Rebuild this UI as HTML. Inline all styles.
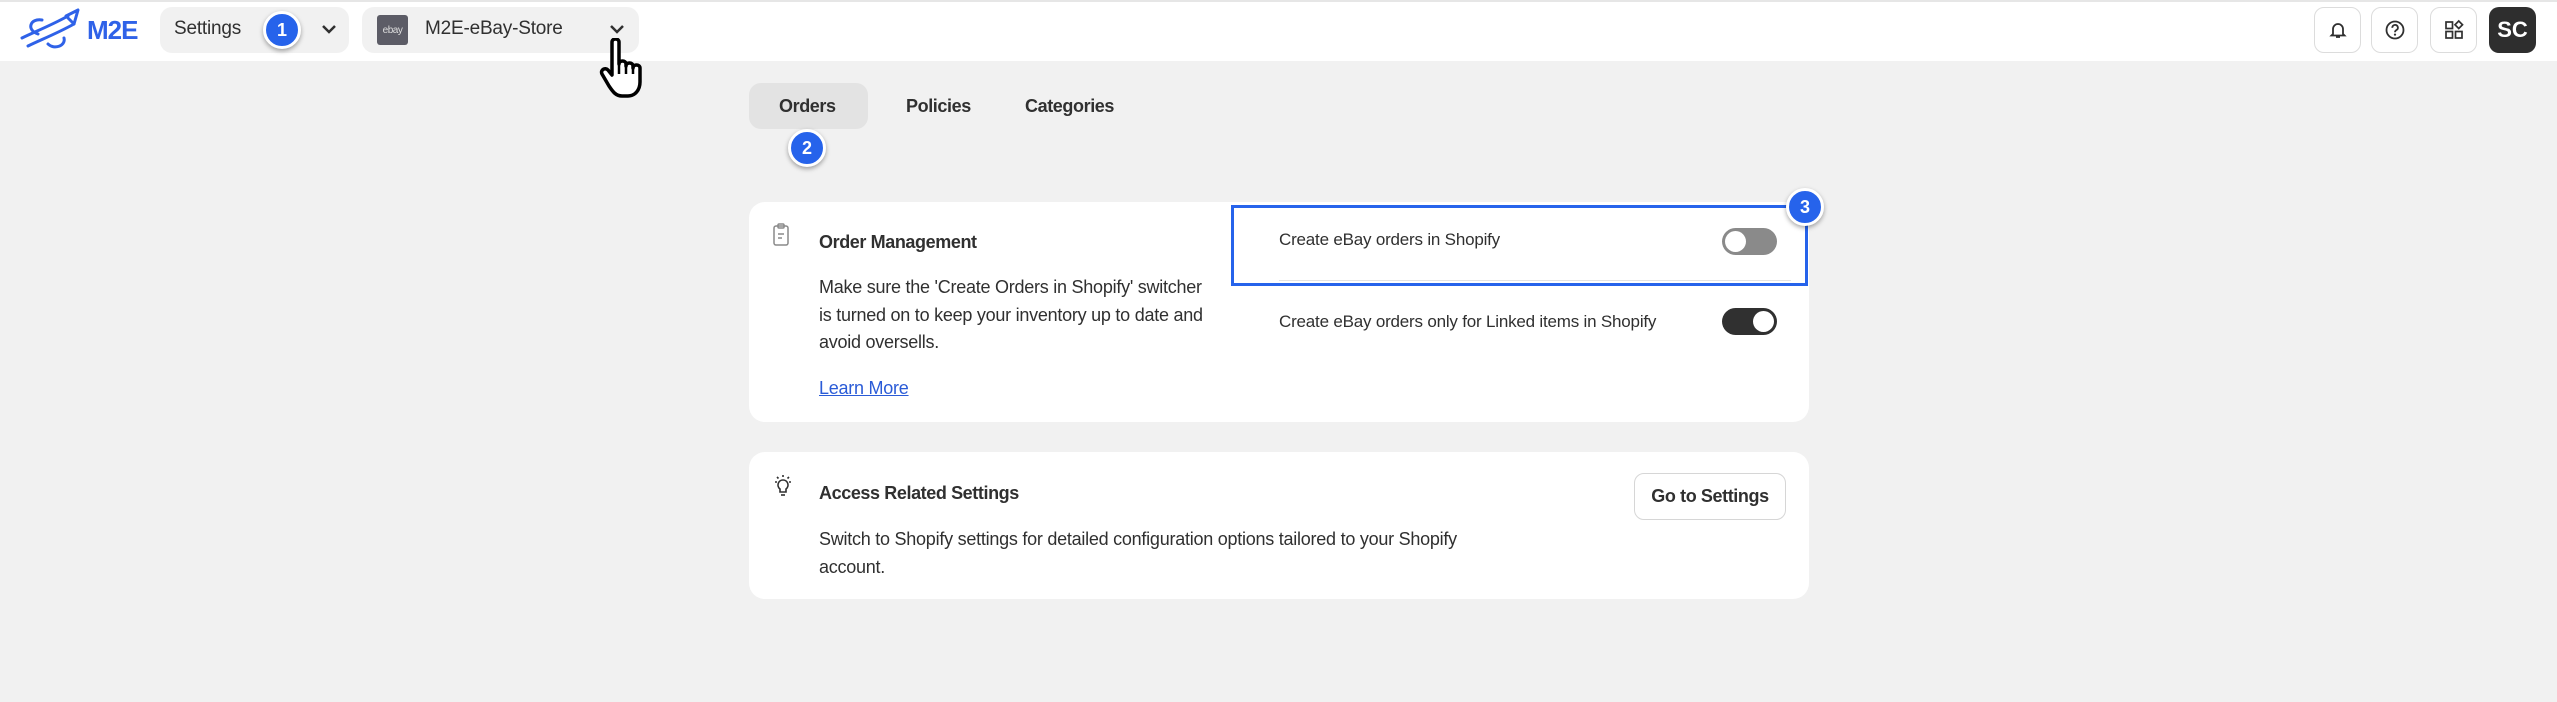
<!DOCTYPE html>
<html><head><meta charset="utf-8"><style>
*{box-sizing:border-box;margin:0;padding:0}
body{width:2557px;height:702px;background:#f1f1f1;font-family:"Liberation Sans",sans-serif;color:#303030;position:relative;overflow:hidden}
.a{position:absolute}
.bar{left:0;top:0;width:2557px;height:61px;background:#fff;border-top:2px solid #e6e6e6}
.pill{background:#f1f1f1;border-radius:12px;top:7px;height:46px}
.badge{position:absolute;width:38px;height:38px;border-radius:50%;background:#2663eb;border:3px solid #fff;box-shadow:0 2px 5px rgba(0,0,0,.35);color:#fff;font-size:18px;font-weight:bold;display:flex;align-items:center;justify-content:center}
.ib{top:7px;width:47px;height:46px;border:1.5px solid #dcdcdc;border-radius:10px;background:#fff;display:flex;align-items:center;justify-content:center}
.card{background:#fff;border-radius:16px;left:749px;width:1060px}
.t{font-size:17px;letter-spacing:-.2px;white-space:nowrap}
.h{font-size:18px;font-weight:bold;letter-spacing:-.4px;white-space:nowrap}
.p{font-size:18px;letter-spacing:-.25px;line-height:27.5px;white-space:nowrap}
</style></head><body>
<div class="a bar"></div>
<!-- logo -->
<svg class="a" style="left:18px;top:8px" width="70" height="44" viewBox="0 0 70 44"><g fill="none" stroke="#2f62e8" stroke-width="3" stroke-linecap="round" stroke-linejoin="round"><path d="M4 30 C16 24 32 18 50 8"/><path d="M10 38 C22 32 38 26 56 16"/><path d="M24 12 C12 10 8 22 20 26"/><path d="M30 36 C36 42 48 38 46 30"/><path d="M48 8 L60 2 L56 16 Z"/></g></svg>
<div class="a" style="left:87px;top:15px;font-size:26px;font-weight:bold;color:#2f62e8;letter-spacing:-1px">M2E</div>
<div class="a pill" style="left:160px;width:189px"></div>
<div class="a t" style="left:174px;top:18px;font-size:19px">Settings</div>
<div class="badge" style="left:263px;top:11px">1</div>
<svg class="a" style="left:320px;top:22px" width="18" height="14" viewBox="0 0 18 14"><path d="M3 4l6 6 6-6" stroke="#303030" stroke-width="2.5" fill="none"/></svg>
<div class="a pill" style="left:362px;width:277px"></div>
<div class="a" style="left:377px;top:15px;width:31px;height:30px;background:#5c5c66;border-radius:3px;color:#ddd;font-size:10px;display:flex;align-items:center;justify-content:center;letter-spacing:-.5px">ebay</div>
<div class="a t" style="left:425px;top:18px;font-size:19px">M2E-eBay-Store</div>
<svg class="a" style="left:608px;top:22px" width="18" height="14" viewBox="0 0 18 14"><path d="M3 4l6 6 6-6" stroke="#303030" stroke-width="2.5" fill="none"/></svg>
<!-- hand cursor -->
<svg class="a" style="left:598px;top:38px" width="54" height="62" viewBox="0 0 54 62"><path d="M14 4c0-4 7-4 7 0v22c0-4 7-4 7 0v2c0-4 7-4 7 0v2c0-4 7-4 7 0v14c0 8-5 14-12 14h-6c-6 0-9-4-13-10L4 36c-2-4 3-7 6-4l4 5z" fill="#fff" stroke="#000" stroke-width="3.5" stroke-linejoin="round"/><path d="M21 26v10M28 28v8M35 30v6" stroke="#000" stroke-width="2.5"/></svg>
<!-- right icons -->
<div class="a ib" style="left:2314px"><svg width="20" height="20" viewBox="0 0 20 20"><path d="M5 14V9a5 5 0 0110 0v5l1.5 1.5h-13z M8 17h4" fill="none" stroke="#303030" stroke-width="1.8"/></svg></div>
<div class="a ib" style="left:2371px"><svg width="22" height="22" viewBox="0 0 22 22"><circle cx="11" cy="11" r="8.5" fill="none" stroke="#303030" stroke-width="1.8"/><path d="M8.3 8.8a2.8 2.8 0 115 1.6c-1 .8-2.3 1.2-2.3 2.8" fill="none" stroke="#303030" stroke-width="1.8"/><circle cx="11" cy="15.6" r="1.1" fill="#303030"/></svg></div>
<div class="a ib" style="left:2430px"><svg width="22" height="22" viewBox="0 0 22 22"><g fill="none" stroke="#303030" stroke-width="1.7"><rect x="3" y="3" width="6.5" height="6.5"/><rect x="3" y="12.5" width="6.5" height="6.5"/><rect x="12.5" y="12.5" width="6.5" height="6.5"/><path d="M15.75 2l3.75 3.75-3.75 3.75-3.75-3.75z"/></g></svg></div>
<div class="a" style="left:2489px;top:7px;width:47px;height:46px;border-radius:10px;background:#2e2e2e;color:#fff;font-weight:bold;font-size:22px;display:flex;align-items:center;justify-content:center">SC</div>
<!-- tabs -->
<div class="a" style="left:749px;top:83px;width:119px;height:46px;background:#e3e3e3;border-radius:12px"></div>
<div class="a h" style="left:779px;top:96px;font-size:18px;color:#303030">Orders</div>
<div class="a h" style="left:906px;top:96px;font-size:18px">Policies</div>
<div class="a h" style="left:1025px;top:96px;font-size:18px">Categories</div>
<div class="badge" style="left:788px;top:129px">2</div>
<!-- card 1 -->
<div class="a card" style="top:202px;height:220px"></div>
<svg class="a" style="left:772px;top:223px" width="18" height="24" viewBox="0 0 18 24"><g fill="none" stroke="#8a8a8a" stroke-width="1.5"><rect x="2" y="3" width="14" height="19" rx="2"/><rect x="6" y="1" width="6" height="4" rx="1"/><path d="M6 11h6M6 15h4"/></g></svg>
<div class="a h" style="left:819px;top:232px">Order Management</div>
<div class="a p" style="left:819px;top:274px">Make sure the 'Create Orders in Shopify' switcher<br>is turned on to keep your inventory up to date and<br>avoid oversells.</div>
<div class="a p" style="left:819px;top:375px;color:#2a5bd7;text-decoration:underline">Learn More</div>
<div class="a t" style="left:1279px;top:230px">Create eBay orders in Shopify</div>
<div class="a" style="left:1722px;top:228px;width:55px;height:27px;border-radius:14px;background:#8a8a8a"><div style="position:absolute;left:3px;top:3px;width:21px;height:21px;border-radius:50%;background:#fff"></div></div>
<div class="a" style="left:1279px;top:280px;width:512px;height:1px;background:#e3e3e3"></div>
<div class="a t" style="left:1279px;top:312px">Create eBay orders only for Linked items in Shopify</div>
<div class="a" style="left:1722px;top:308px;width:55px;height:27px;border-radius:14px;background:#303030"><div style="position:absolute;right:3px;top:3px;width:21px;height:21px;border-radius:50%;background:#fff"></div></div>
<div class="a" style="left:1231px;top:205px;width:577px;height:81px;border:3.5px solid #2663eb"></div>
<div class="badge" style="left:1786px;top:188px">3</div>
<!-- card 2 -->
<div class="a card" style="top:452px;height:147px"></div>
<svg class="a" style="left:772px;top:474px" width="22" height="24" viewBox="0 0 22 24"><g fill="none" stroke="#303030" stroke-width="1.6"><path d="M11 6a5 5 0 00-3 9v3h6v-3a5 5 0 00-3-9z"/><path d="M9 21h4"/><path d="M11 1v2M3 8h2M17 8h2M5 3l1.5 1.5M17 3l-1.5 1.5"/></g></svg>
<div class="a h" style="left:819px;top:483px">Access Related Settings</div>
<div class="a p" style="left:819px;top:526px">Switch to Shopify settings for detailed configuration options tailored to your Shopify<br>account.</div>
<div class="a" style="left:1634px;top:473px;width:152px;height:47px;border:1.5px solid #d6d6d6;border-radius:10px;display:flex;align-items:center;justify-content:center" ><span class="h" style="font-size:18px">Go to Settings</span></div>
</body></html>
